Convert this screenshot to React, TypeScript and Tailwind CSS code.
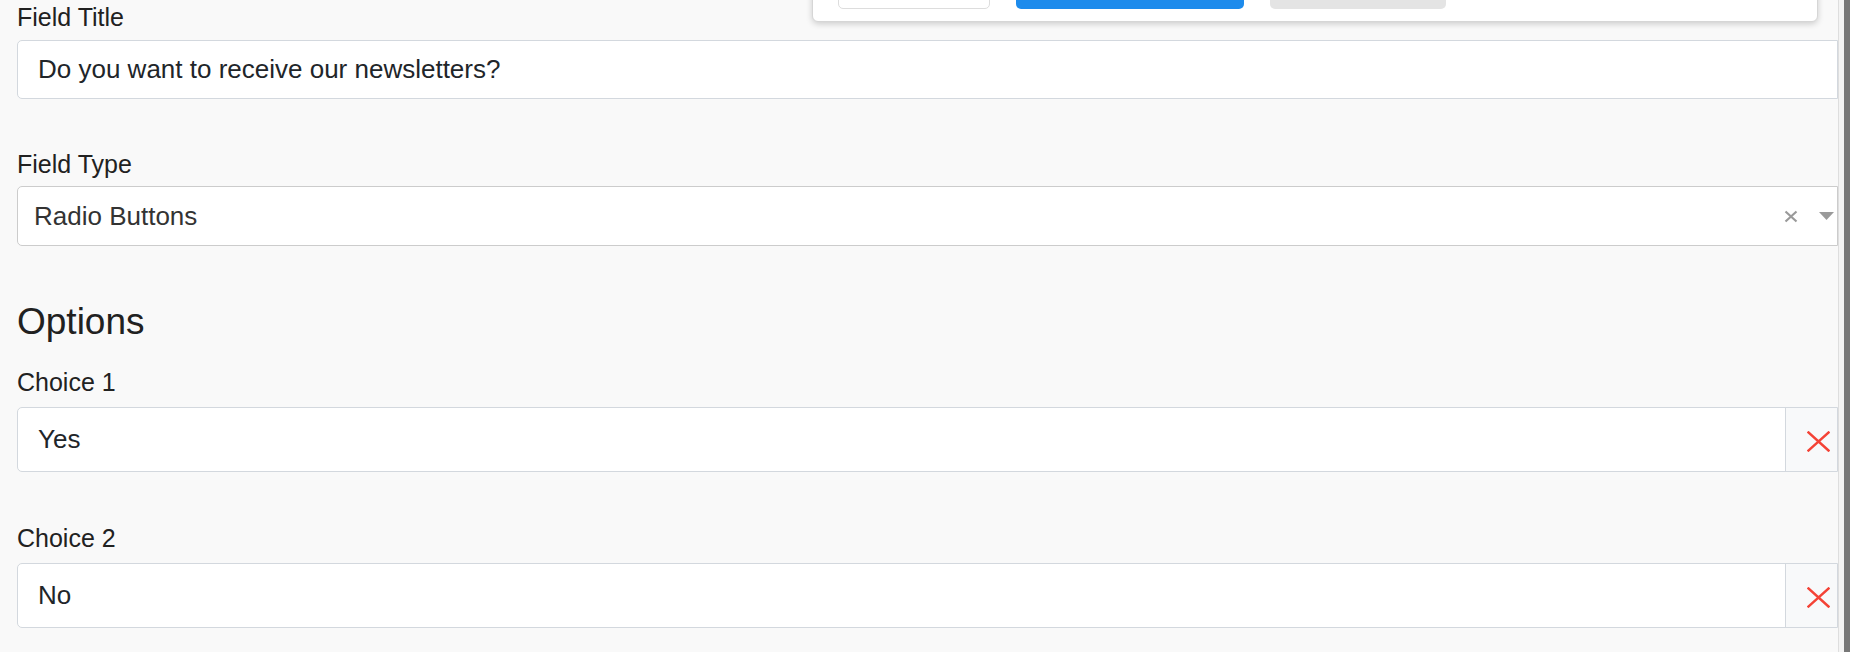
import React from "react";

const RemoveIcon = () => (
  <svg width="23" height="21" viewBox="0 0 23 21" fill="none">
    <path d="M1.5 1.5L21.5 19.5M21.5 1.5L1.5 19.5" stroke="#f44336" strokeWidth="2.4" strokeLinecap="square" />
  </svg>
);

const ClearIcon = () => (
  <svg width="14" height="13" viewBox="0 0 14 13" fill="none">
    <path d="M1.5 1.5L12.5 11.5M12.5 1.5L1.5 11.5" stroke="#9a9a9a" strokeWidth="2.2" />
  </svg>
);

const CaretIcon = () => (
  <svg width="15" height="8" viewBox="0 0 15 8">
    <polygon points="0,0 15,0 7.5,8" fill="#9a9a9a" />
  </svg>
);

const Label = ({ children, className = "" }: { children: React.ReactNode; className?: string }) => (
  <div className={`h-[30px] text-[25px] leading-[30px] text-[#212121] ${className}`}>{children}</div>
);

const ChoiceRow = ({ value }: { value: string }) => (
  <div className="flex h-[65px] overflow-hidden rounded-l-[5px] border border-[#d3d8de] bg-white">
    <div className="flex flex-1 items-center pl-[20px] text-[26px] text-[#212529]">{value}</div>
    <div className="flex w-[52px] items-center border-l border-[#d3d8de] bg-[#f8f9fa] pl-[21px] pt-[3px]">
      <RemoveIcon />
    </div>
  </div>
);

export default function App() {
  return (
    <div className="relative flex h-[652px] w-[1850px] overflow-hidden bg-[#f9f9f9] font-['Liberation_Sans',Arial,sans-serif]">
      <div className="w-[1839px] border-r border-[#dedede] pl-[17px] pt-[2px]">
        <Label className="mb-[8px]">Field Title</Label>
        <div className="flex h-[59px] items-center rounded-l-[5px] border border-[#d3d8de] bg-white pl-[20px] text-[26px] text-[#212529]">
          Do you want to receive our newsletters?
        </div>

        <Label className="mb-[7px] mt-[50px]">Field Type</Label>
        <div className="flex h-[60px] items-center rounded-l-[5px] border border-[#cccccc] bg-white pl-[16px] pr-[3px]">
          <span className="flex-1 text-[26px] text-[#333333]">Radio Buttons</span>
          <div className="flex items-center gap-[21px]">
            <ClearIcon />
            <CaretIcon />
          </div>
        </div>

        <h2 className="mt-[54px] h-[44px] text-[37px] font-normal leading-[44px] text-[#212121]">Options</h2>

        <Label className="mb-[10px] mt-[23px]">Choice 1</Label>
        <ChoiceRow value="Yes" />

        <Label className="mb-[10px] mt-[51px]">Choice 2</Label>
        <ChoiceRow value="No" />
      </div>
      <div className="w-[5px] bg-[#f4f4f4]" />
      <div className="w-[6px] bg-[#787878]" />

      {/* floating action card, mostly scrolled off the top */}
      <div className="absolute left-[812px] top-[-58px] flex h-[80px] w-[1006px] items-end gap-[26px] rounded-[6px] border border-[#d6d6d6] bg-white pb-[12px] pl-[25px] shadow-[0_2px_6px_rgba(0,0,0,0.18)]">
        <div className="h-[40px] w-[152px] rounded-[5px] border border-[#dddddd] bg-white" />
        <div className="h-[40px] w-[228px] rounded-[5px] bg-[#1d8bec]" />
        <div className="h-[40px] w-[176px] rounded-[5px] bg-[#e4e4e4]" />
      </div>
    </div>
  );
}
